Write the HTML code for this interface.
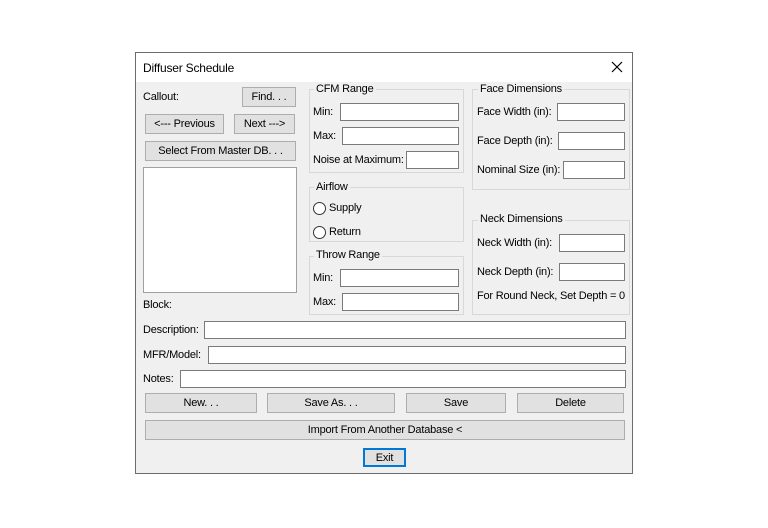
<!DOCTYPE html><html><head><style>
body{margin:0;width:768px;height:528px;background:#fff;font-family:"Liberation Sans",sans-serif;font-size:11px;color:#000;position:relative;overflow:hidden;letter-spacing:-0.2px}
.a{position:absolute}
#win{left:135px;top:52px;width:496px;height:420px;border:1px solid #6b6b6b;background:#f0f0f0}
#tb{left:136px;top:53px;width:496px;height:29px;background:#fff}
.btn{position:absolute;background:#e1e1e1;border:1px solid #adadad;box-sizing:border-box;text-align:center;display:flex;align-items:center;justify-content:center}
.in{position:absolute;background:#fff;border:1px solid #7a7a7a;box-sizing:border-box}
.grp{position:absolute;border:1px solid #d8d8d8;box-sizing:border-box}
.gl{position:absolute;background:#f0f0f0;padding:0 2px;line-height:12px}
.l{position:absolute;line-height:12px;white-space:nowrap}
.r{position:absolute;width:13px;height:13px;border:1px solid #333;border-radius:50%;background:#fff;box-sizing:border-box}
</style></head><body>
<div class="a" id="win"></div><div class="a" id="tb"></div>
<div class="l" style="left:143px;top:62px;font-size:12px">Diffuser Schedule</div>
<svg class="a" style="left:611px;top:61px" width="12" height="12"><path d="M1 1L11 11M11 1L1 11" stroke="#000" stroke-width="1.2"/></svg>
<div class="l" style="left:143px;top:91px">Callout:</div>
<div class="btn" style="left:242px;top:87px;width:54px;height:20px">Find. . .</div>
<div class="btn" style="left:145px;top:114px;width:79px;height:20px">&lt;--- Previous</div>
<div class="btn" style="left:234px;top:114px;width:61px;height:20px">Next ---&gt;</div>
<div class="btn" style="left:145px;top:141px;width:151px;height:20px">Select From Master DB. . .</div>
<div class="in" style="left:143px;top:167px;width:154px;height:126px;border-color:#a0a0a0"></div>
<div class="l" style="left:143px;top:299px">Block:</div>

<div class="grp" style="left:309px;top:89px;width:155px;height:84px"></div>
<div class="gl" style="left:314px;top:83px">CFM Range</div>
<div class="l" style="left:313px;top:106px">Min:</div><div class="in" style="left:340px;top:103px;width:119px;height:18px"></div>
<div class="l" style="left:313px;top:130px">Max:</div><div class="in" style="left:342px;top:127px;width:117px;height:18px"></div>
<div class="l" style="left:313px;top:154px">Noise at Maximum:</div><div class="in" style="left:406px;top:151px;width:53px;height:18px"></div>

<div class="grp" style="left:309px;top:187px;width:155px;height:55px"></div>
<div class="gl" style="left:314px;top:181px">Airflow</div>
<div class="r" style="left:313px;top:202px"></div><div class="l" style="left:329px;top:202px">Supply</div>
<div class="r" style="left:313px;top:226px"></div><div class="l" style="left:329px;top:226px">Return</div>

<div class="grp" style="left:309px;top:256px;width:155px;height:59px"></div>
<div class="gl" style="left:314px;top:249px">Throw Range</div>
<div class="l" style="left:313px;top:272px">Min:</div><div class="in" style="left:340px;top:269px;width:119px;height:18px"></div>
<div class="l" style="left:313px;top:296px">Max:</div><div class="in" style="left:342px;top:293px;width:117px;height:18px"></div>

<div class="grp" style="left:472px;top:89px;width:158px;height:101px"></div>
<div class="gl" style="left:478px;top:83px">Face Dimensions</div>
<div class="l" style="left:477px;top:106px">Face Width (in):</div><div class="in" style="left:557px;top:103px;width:68px;height:18px"></div>
<div class="l" style="left:477px;top:135px">Face Depth (in):</div><div class="in" style="left:558px;top:132px;width:67px;height:18px"></div>
<div class="l" style="left:477px;top:164px">Nominal Size (in):</div><div class="in" style="left:563px;top:161px;width:62px;height:18px"></div>

<div class="grp" style="left:472px;top:220px;width:158px;height:95px"></div>
<div class="gl" style="left:478px;top:213px">Neck Dimensions</div>
<div class="l" style="left:477px;top:237px">Neck Width (in):</div><div class="in" style="left:559px;top:234px;width:66px;height:18px"></div>
<div class="l" style="left:477px;top:266px">Neck Depth (in):</div><div class="in" style="left:559px;top:263px;width:66px;height:18px"></div>
<div class="l" style="left:477px;top:290px">For Round Neck, Set Depth = 0</div>

<div class="l" style="left:143px;top:324px">Description:</div><div class="in" style="left:204px;top:321px;width:422px;height:18px"></div>
<div class="l" style="left:143px;top:349px">MFR/Model:</div><div class="in" style="left:208px;top:346px;width:418px;height:18px"></div>
<div class="l" style="left:143px;top:373px">Notes:</div><div class="in" style="left:180px;top:370px;width:446px;height:18px"></div>

<div class="btn" style="left:145px;top:393px;width:112px;height:20px">New. . .</div>
<div class="btn" style="left:267px;top:393px;width:128px;height:20px">Save As. . .</div>
<div class="btn" style="left:406px;top:393px;width:100px;height:20px">Save</div>
<div class="btn" style="left:517px;top:393px;width:107px;height:20px">Delete</div>
<div class="btn" style="left:145px;top:420px;width:480px;height:20px">Import From Another Database &lt;</div>
<div class="btn" style="left:363px;top:448px;width:43px;height:19px;border:2px solid #0078d7">Exit</div>
</body></html>
